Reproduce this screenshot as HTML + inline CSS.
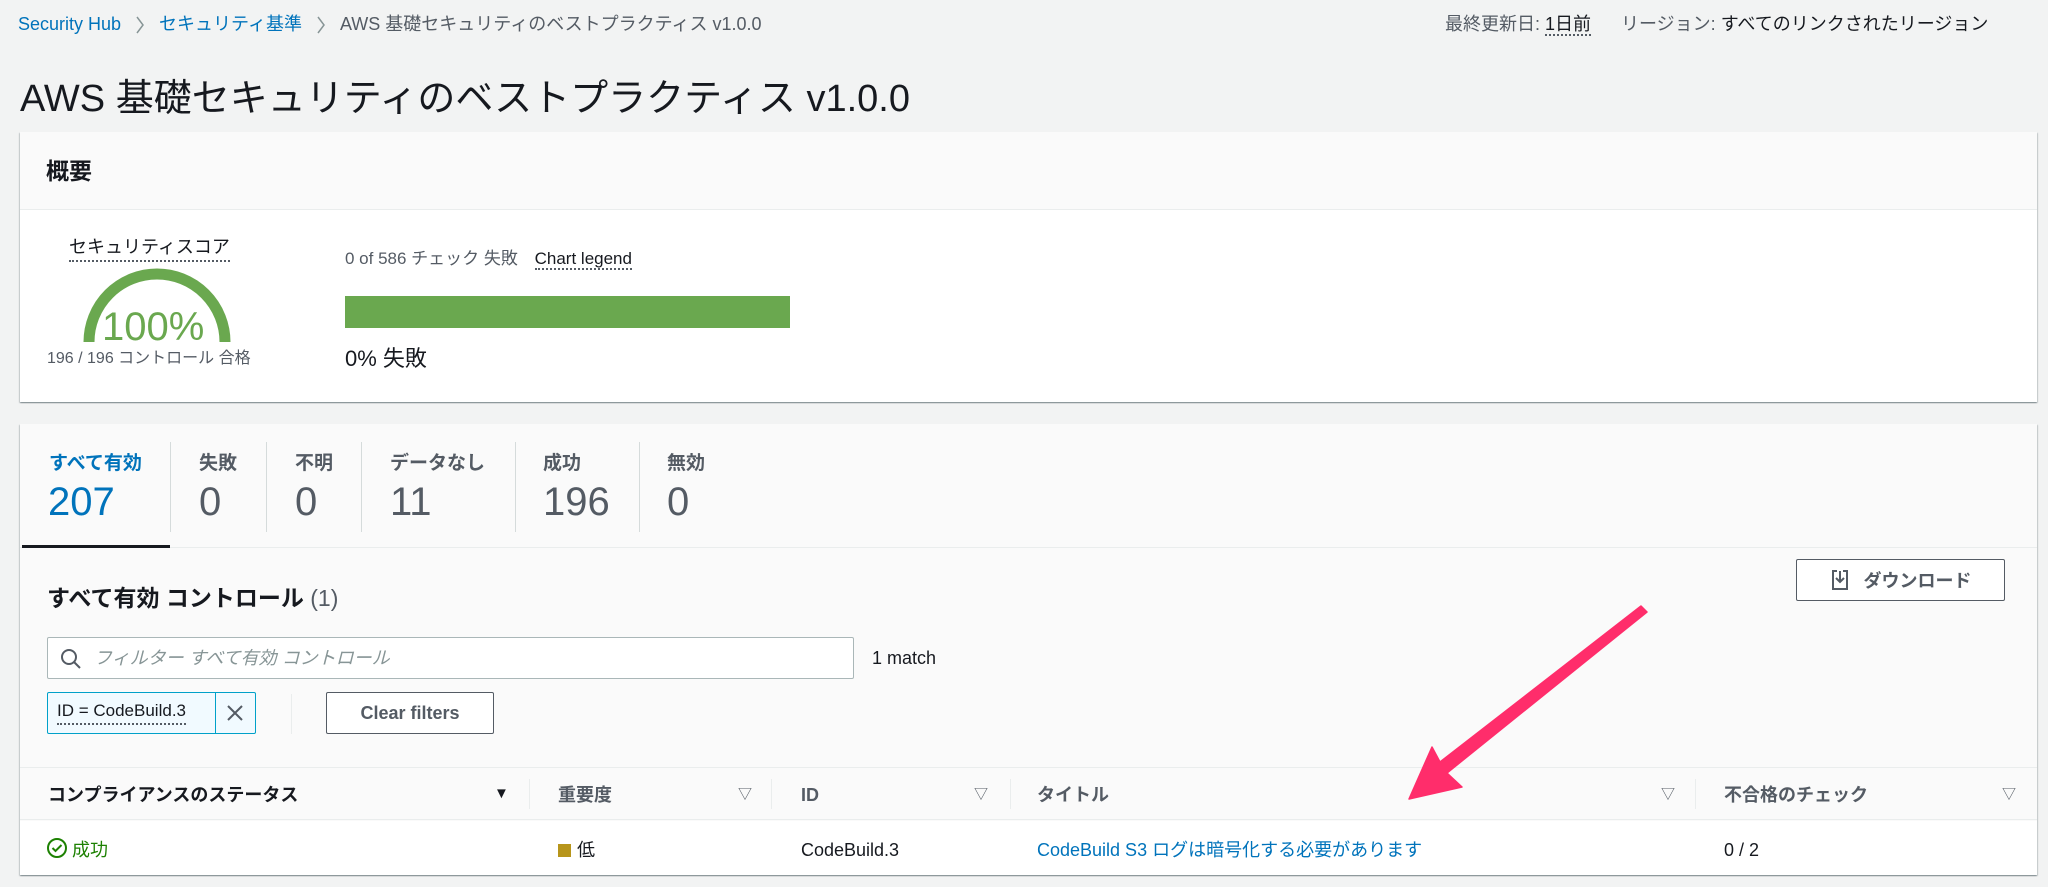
<!DOCTYPE html>
<html><head><meta charset="utf-8"><style>
*{box-sizing:border-box;margin:0;padding:0}
body{width:2048px;height:887px;background:#f2f3f3;font-family:"Liberation Sans","Noto Sans CJK JP",sans-serif;color:#16191f;position:relative;overflow:hidden;font-size:18px}
.a{position:absolute;white-space:nowrap;line-height:1.35}
.blue{color:#0073bb}
.grey{color:#545b64}
.panel{position:absolute;background:#fff;box-shadow:0 1px 1px 0 rgba(0,28,36,.3),1px 1px 1px 0 rgba(0,28,36,.15),-1px 1px 1px 0 rgba(0,28,36,.15)}
.dot{border-bottom:2px dotted #545b64}
.sep{position:absolute;width:1px;background:#d5dbdb}
.btn{position:absolute;border:1px solid #545b64;border-radius:2px;background:#fff;font-weight:bold;color:#545b64;display:flex;align-items:center;justify-content:center;font-size:18px}
.tri{font-size:14px;color:#545b64}
.chev{display:inline-block;vertical-align:middle;margin:0 14px}
</style></head><body>
<div class="a" style="left:18px;top:12px;font-size:18px"><span class="blue">Security Hub</span><svg class="chev" width="10" height="20"><path d="M2 2l6 8-6 8" fill="none" stroke="#879596" stroke-width="1.5"/></svg><span class="blue">セキュリティ基準</span><svg class="chev" width="10" height="20"><path d="M2 2l6 8-6 8" fill="none" stroke="#879596" stroke-width="1.5"/></svg><span class="grey">AWS 基礎セキュリティのベストプラクティス v1.0.0</span></div>
<div class="a" style="left:1445px;top:12px;font-size:18px"><span class="grey">最終更新日: </span><span class="dot">1日前</span><span class="grey" style="margin-left:30px">リージョン: </span>すべてのリンクされたリージョン</div>
<div class="a" style="left:20px;top:77px;font-size:38px;line-height:1.2">AWS 基礎セキュリティのベストプラクティス v1.0.0</div>

<div class="panel" style="left:20px;top:132px;width:2017px;height:270px">
 <div style="position:absolute;left:0;top:0;right:0;height:78px;background:#fafafa;border-bottom:1px solid #eaeded"></div>
 <div class="a" style="left:26px;top:24px;font-size:23px;font-weight:bold">概要</div>
 <div class="a dot" style="left:49px;top:102px;font-size:18px;line-height:26px">セキュリティスコア</div>
 <svg class="a" style="left:57px;top:122px" width="160" height="90"><path d="M12 88 A68 68 0 0 1 148 88" fill="none" stroke="#6aa84f" stroke-width="11"/></svg>
 <div class="a" style="left:82px;top:168px;font-size:40px;color:#6aa84f">100%</div>
 <div class="a grey" style="left:27px;top:216px;font-size:16px">196 / 196 コントロール 合格</div>
 <div class="a grey" style="left:325px;top:116px;font-size:17px">0 of 586 チェック 失敗 <span class="dot" style="color:#16191f;margin-left:12px">Chart legend</span></div>
 <div style="position:absolute;left:325px;top:164px;width:445px;height:32px;background:#6aa84f"></div>
 <div class="a" style="left:325px;top:212px;font-size:22px">0% 失敗</div>
</div>

<div class="panel" style="left:20px;top:424px;width:2017px;height:451px;background:#fafafa">
 <div style="position:absolute;left:0;top:0;right:0;height:124px;background:#fafafa;border-bottom:1px solid #eaeded"></div>
 <div style="position:absolute;left:2px;top:121px;width:148px;height:3px;background:#16191f"></div>
 <div class="sep" style="left:150px;top:18px;height:90px"></div>
 <div class="sep" style="left:246px;top:18px;height:90px"></div>
 <div class="sep" style="left:341px;top:18px;height:90px"></div>
 <div class="sep" style="left:495px;top:18px;height:90px"></div>
 <div class="sep" style="left:619px;top:18px;height:90px"></div>
 <div class="a blue" style="left:29px;top:27px;font-size:19px;font-weight:bold">すべて有効</div><div class="a blue" style="left:28px;top:51px;font-size:40px">207</div>
 <div class="a grey" style="left:179px;top:27px;font-size:19px;font-weight:bold">失敗</div><div class="a grey" style="left:179px;top:51px;font-size:40px">0</div>
 <div class="a grey" style="left:275px;top:27px;font-size:19px;font-weight:bold">不明</div><div class="a grey" style="left:275px;top:51px;font-size:40px">0</div>
 <div class="a grey" style="left:370px;top:27px;font-size:19px;font-weight:bold">データなし</div><div class="a grey" style="left:370px;top:51px;font-size:40px">11</div>
 <div class="a grey" style="left:523px;top:27px;font-size:19px;font-weight:bold">成功</div><div class="a grey" style="left:523px;top:51px;font-size:40px">196</div>
 <div class="a grey" style="left:647px;top:27px;font-size:19px;font-weight:bold">無効</div><div class="a grey" style="left:647px;top:51px;font-size:40px">0</div>

 <div class="a" style="left:27px;top:159px;font-size:23px;font-weight:bold">すべて有効 コントロール <span class="grey" style="font-weight:normal">(1)</span></div>
 <div class="btn" style="left:1776px;top:135px;width:209px;height:42px"><svg width="20" height="22" style="margin-right:14px"><path d="M7 2H3v18h14V2h-4" fill="none" stroke="#545b64" stroke-width="2"/><path d="M10 2v11M6 9l4 4 4-4" fill="none" stroke="#545b64" stroke-width="2"/></svg>ダウンロード</div>
 <div style="position:absolute;left:27px;top:213px;width:807px;height:42px;background:#fff;border:1px solid #aab7b8;border-radius:2px"></div>
 <svg class="a" style="left:40px;top:224px" width="22" height="22"><circle cx="9" cy="9" r="7" fill="none" stroke="#545b64" stroke-width="2"/><path d="M14 14l6 6" stroke="#545b64" stroke-width="2"/></svg>
 <div class="a" style="left:74px;top:222px;font-size:18px;color:#879596;font-style:italic">フィルター すべて有効 コントロール</div>
 <div class="a" style="left:852px;top:222px;font-size:18px">1 match</div>
 <div style="position:absolute;left:27px;top:268px;width:209px;height:42px;background:#f1faff;border:1px solid #00a1c9;border-radius:2px"></div>
 <div class="sep" style="left:195px;top:268px;height:42px;background:#00a1c9"></div>
 <div class="a dot" style="left:37px;top:276px;font-size:17px">ID = CodeBuild.3</div>
 <svg class="a" style="left:205px;top:279px" width="20" height="20"><path d="M3 3l14 14M17 3L3 17" stroke="#545b64" stroke-width="2"/></svg>
 <div class="sep" style="left:271px;top:270px;height:40px;background:#eaeded"></div>
 <div class="btn" style="left:306px;top:268px;width:168px;height:42px">Clear filters</div>

 <div style="position:absolute;left:0;top:343px;right:0;height:53px;background:#fafafa;border-top:1px solid #eaeded;border-bottom:1px solid #eaeded"></div>
 <div class="sep" style="left:509px;top:355px;height:30px;background:#eaeded"></div>
 <div class="sep" style="left:751px;top:355px;height:30px;background:#eaeded"></div>
 <div class="sep" style="left:990px;top:355px;height:30px;background:#eaeded"></div>
 <div class="sep" style="left:1675px;top:355px;height:30px;background:#eaeded"></div>
 <div class="a" style="left:28px;top:359px;font-size:18px;font-weight:bold">コンプライアンスのステータス</div><div class="a" style="left:474px;top:360px;font-size:15px">▼</div>
 <div class="a grey" style="left:538px;top:359px;font-size:18px;font-weight:bold">重要度</div><div class="a tri" style="left:718px;top:361px">▽</div>
 <div class="a grey" style="left:781px;top:359px;font-size:18px;font-weight:bold">ID</div><div class="a tri" style="left:954px;top:361px">▽</div>
 <div class="a grey" style="left:1017px;top:359px;font-size:18px;font-weight:bold">タイトル</div><div class="a tri" style="left:1641px;top:361px">▽</div>
 <div class="a grey" style="left:1704px;top:359px;font-size:18px;font-weight:bold">不合格のチェック</div><div class="a tri" style="left:1982px;top:361px">▽</div>
 <div style="position:absolute;left:0;top:397px;right:0;bottom:0;background:#fff"></div>
 <svg class="a" style="left:26px;top:413px" width="22" height="22"><circle cx="11" cy="11" r="9" fill="none" stroke="#1d8102" stroke-width="2"/><path d="M6.5 11l3 3 6-6" fill="none" stroke="#1d8102" stroke-width="2"/></svg>
 <div class="a" style="left:52px;top:414px;font-size:18px;color:#1d8102">成功</div>
 <div style="position:absolute;left:538px;top:420px;width:13px;height:13px;background:#b7951b"></div>
 <div class="a" style="left:557px;top:414px;font-size:18px">低</div>
 <div class="a" style="left:781px;top:414px;font-size:18px">CodeBuild.3</div>
 <div class="a blue" style="left:1017px;top:414px;font-size:18px">CodeBuild S3 ログは暗号化する必要があります</div>
 <div class="a" style="left:1704px;top:414px;font-size:18px">0 / 2</div>
</div>

<svg class="a" style="left:0;top:0" width="2048" height="887"><path d="M1641 606 L1647 612 L1447 773 L1462 787 L1409 799 L1432 747 L1440 762 Z" fill="#ff2d6b" stroke="#ff2d6b" stroke-width="1.5" stroke-linejoin="round"/></svg>
</body></html>
